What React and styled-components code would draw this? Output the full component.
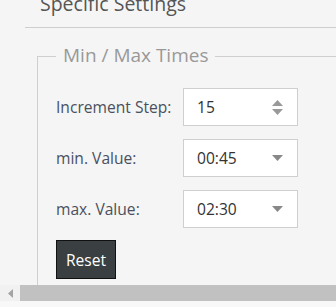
import React from "react";
import styled, { createGlobalStyle } from "styled-components";

const GlobalStyle = createGlobalStyle`
  html, body {
    margin: 0;
    padding: 0;
    background: #f5f5f5;
  }
  body {
    font-family: "Open Sans", "Liberation Sans", sans-serif;
  }
`;

const Viewport = styled.div`
  width: 336px;
  height: 307px;
  display: flex;
  flex-direction: column;
  overflow: hidden;
  background: #f5f5f5;
`;

const Content = styled.div`
  flex: 1;
  overflow: hidden;
  padding-left: 25px;
`;

const Heading = styled.h2`
  margin: -8px 0 0;
  padding: 0 0 11px 15px;
  font-size: 19.5px;
  line-height: 24px;
  font-weight: 400;
  color: #555;
  border-bottom: 1px solid #cfcfcf;
  white-space: nowrap;
`;

const Fieldset = styled.fieldset`
  margin: 16px 0 0 12px;
  width: 400px;
  padding: 19px 0 20px 18px;
  border: 1px solid #cfcfcf;
  border-right: none;
  min-inline-size: 0;
`;

const Legend = styled.legend`
  padding: 0 7px 3px;
  font-size: 19px;
  line-height: 22px;
  color: #999;
`;

const Form = styled.div`
  display: flex;
  flex-direction: column;
  gap: 13px;
  align-items: flex-start;
`;

const Row = styled.div`
  display: grid;
  grid-template-columns: 127px 115px;
  align-items: center;
`;

const Label = styled.label`
  font-size: 15.6px;
  color: #4a5060;
  white-space: nowrap;
`;

const Field = styled.div`
  box-sizing: border-box;
  height: 38px;
  display: flex;
  align-items: center;
  justify-content: space-between;
  padding: 0 14px 0 13px;
  background: #fff;
  border: 1px solid #cfcfcf;
  font-size: 15.6px;
  color: #333;
`;

const Icons = styled.div`
  display: flex;
  flex-direction: column;
  gap: 3px;
`;

const Arrow = ({ up, color = "#999" }) => (
  <svg width="11" height="6" viewBox="0 0 11 6">
    <path d={up ? "M0 6 L5.5 0 L11 6 Z" : "M0 0 L11 0 L5.5 6 Z"} fill={color} />
  </svg>
);

const Button = styled.button`
  box-sizing: border-box;
  width: 60px;
  height: 39px;
  padding: 0;
  margin-top: -1px;
  background: #3a3f42;
  border: 1px solid #111;
  color: #fff;
  font-family: inherit;
  font-size: 15.6px;
`;

const Scrollbar = styled.div`
  height: 22px;
  display: flex;
  flex-direction: column;
  background: #f8f8f8;
`;

const Track = styled.div`
  height: 16px;
  display: flex;
  align-items: center;
  background: #f1f1f1;
`;

const ScrollButton = styled.div`
  width: 20px;
  display: flex;
  justify-content: center;
`;

const Thumb = styled.div`
  flex: 1;
  height: 16px;
  background: #c1c1c1;
`;

const rows = [
  { label: "Increment Step:", value: "15", spin: true },
  { label: "min. Value:", value: "00:45" },
  { label: "max. Value:", value: "02:30" },
];

export default function App() {
  return (
    <Viewport>
      <GlobalStyle />
      <Content>
        <Heading>Specific Settings</Heading>
        <Fieldset>
          <Legend>Min / Max Times</Legend>
          <Form>
            {rows.map((r) => (
              <Row key={r.label}>
                <Label>{r.label}</Label>
                <Field>
                  <span>{r.value}</span>
                  {r.spin ? (
                    <Icons>
                      <Arrow up />
                      <Arrow />
                    </Icons>
                  ) : (
                    <Arrow color="#888" />
                  )}
                </Field>
              </Row>
            ))}
            <Button>Reset</Button>
          </Form>
        </Fieldset>
      </Content>
      <Scrollbar>
        <Track>
          <ScrollButton>
            <svg width="5" height="9" viewBox="0 0 5 9">
              <path d="M5 0 L0 4.5 L5 9 Z" fill="#a3a3a3" />
            </svg>
          </ScrollButton>
          <Thumb />
        </Track>
      </Scrollbar>
    </Viewport>
  );
}
